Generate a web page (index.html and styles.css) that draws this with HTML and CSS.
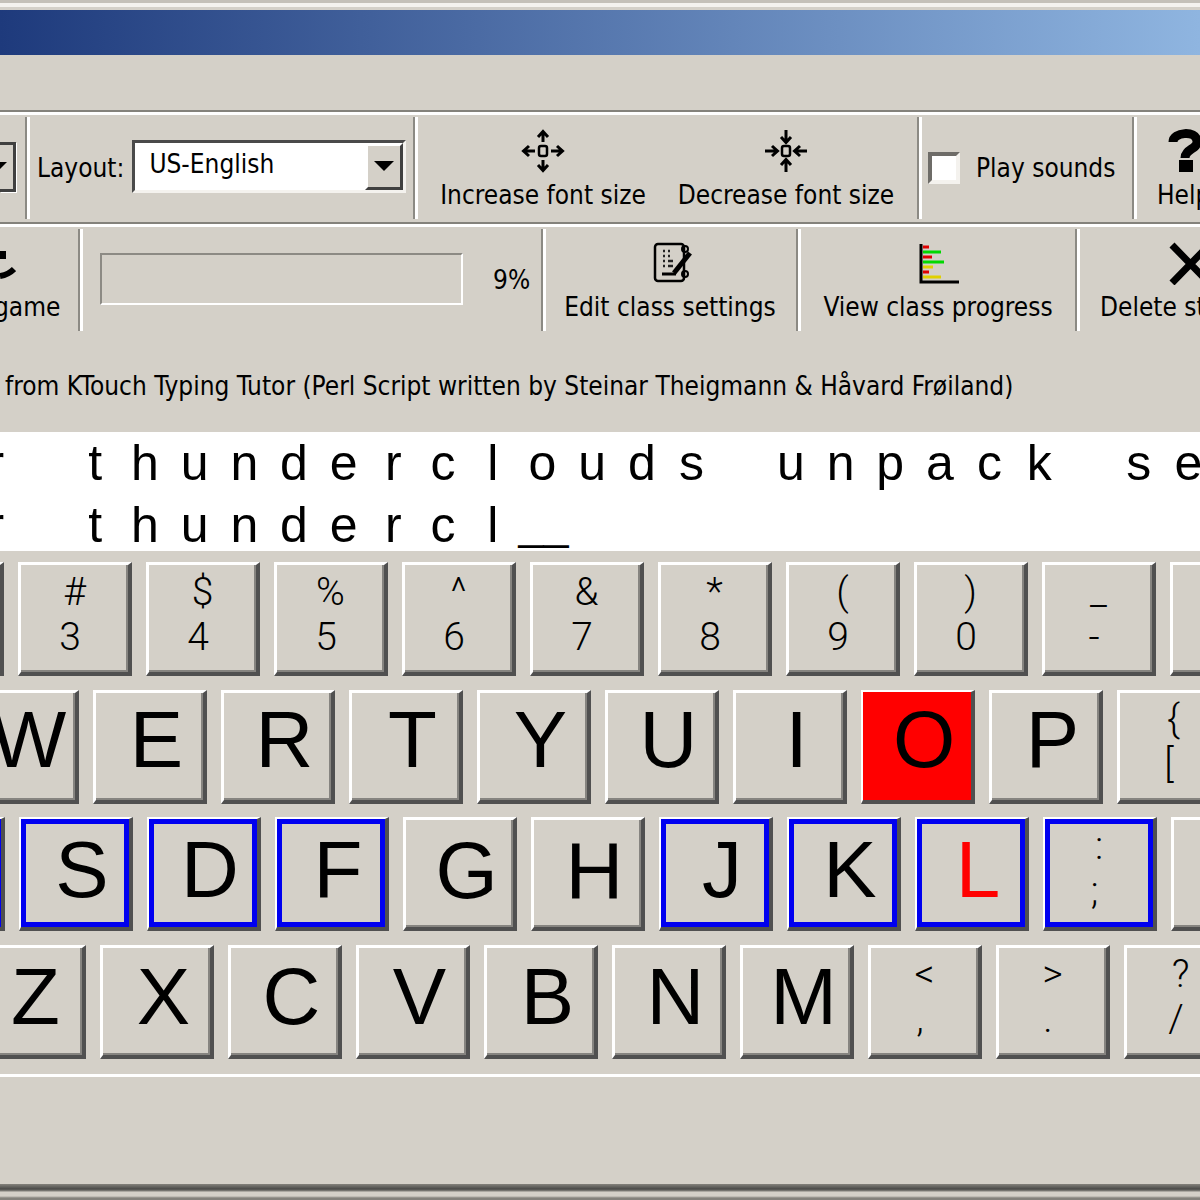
FILE: index.html
```html
<!DOCTYPE html>
<html lang="en">

<head>
    <meta charset="UTF-8">
    <title>Typing Tutor</title>
    <link rel="stylesheet" href="styles.css">
</head>

<body>
    <div class="window">
        <div class="top-edge"></div>
        <div class="title-bar"></div>
        <div class="menu-band"></div>

        <!-- Toolbar 1 -->
        <div class="toolbar">
            <div class="group combo-stub-group">
                <div class="combo-stub"><span class="combo-arrow"></span></div>
            </div>
            <div class="sep"></div>
            <div class="group layout-group">
                <span class="label">Layout:</span>
                <div class="combo">
                    <span class="combo-text">US-English</span>
                    <span class="combo-btn"><span class="combo-arrow"></span></span>
                </div>
            </div>
            <div class="sep"></div>
            <div class="group font-group">
                <div class="tool-btn increase-btn">
                    <svg class="icon" width="44" height="44" viewBox="0 0 44 44">
                        <rect x="18" y="17" width="8" height="10" rx="2" fill="none" stroke="#000" stroke-width="2.5" />
                        <path d="M22 3V13M17 8L22 2.500L27 8M22 31V41M17 36L22 41.500L27 36M3 22H14M8 17L2.500 22L8 27M30 22H41M36 17L41.500 22L36 27" fill="none" stroke="#000" stroke-width="3" />
                    </svg>
                    <span>Increase font size</span>
                </div>
                <div class="tool-btn decrease-btn">
                    <svg class="icon" width="44" height="44" viewBox="0 0 44 44">
                        <rect x="18" y="17" width="8" height="10" rx="2" fill="none" stroke="#000" stroke-width="2.500" />
                        <path d="M22 1V13M17 8L22 13.500L27 8M22 31V43M17 36L22 30.500L27 36M1 22H13M8 17L13.500 22L8 27M31 22H43M36 17L30.500 22L36 27" fill="none" stroke="#000" stroke-width="3" />
                    </svg>
                    <span>Decrease font size</span>
                </div>
            </div>
            <div class="sep"></div>
            <div class="group sound-group">
                <span class="checkbox"></span>
                <span class="label">Play sounds</span>
            </div>
            <div class="sep"></div>
            <div class="tool-btn help-btn">
                <svg class="icon" width="36" height="44" viewBox="0 0 36 44">
                    <path d="M5 13C5 3 28 1 29 12C30 20 17 20 17 29" fill="none" stroke="#000" stroke-width="9" />
                    <rect x="11" y="31" width="14" height="12" />
                </svg>
                <span>Help</span>
            </div>
        </div>

        <!-- Toolbar 2 -->
        <div class="toolbar">
            <div class="tool-btn restart-btn">
                <svg class="icon" width="16" height="44" viewBox="0 0 16 44">
                    <rect x="0" y="10" width="6" height="8" />
                    <path d="M0 35C6 34 10 32 14 28" fill="none" stroke="#000" stroke-width="6" />
                </svg>
                <span>game</span>
            </div>
            <div class="sep"></div>
            <div class="group progress-group">
                <div class="progress"></div>
                <span class="label">9%</span>
            </div>
            <div class="sep"></div>
            <div class="tool-btn edit-btn">
                <svg class="icon edit-icon" width="44" height="44" viewBox="0 0 44 44">
                    <rect x="3" y="3" width="29" height="37" rx="3" fill="none" stroke="#000" stroke-width="2.500" />
                    <path d="M11 10h2M16 10h2M11 15h2M16 15h2M11 20h2M16 20h5M11 25h2M16 25h5" stroke="#222" stroke-width="2.500" fill="none" />
                    <path d="M10 33H24" stroke="#000" stroke-width="3" fill="none" />
                    <path d="M22 32L38 12" stroke="#000" stroke-width="5" fill="none" />
                    <circle cx="33" cy="8" r="3" fill="none" stroke="#000" stroke-width="2" />
                    <circle cx="33" cy="33" r="3" fill="none" stroke="#000" stroke-width="2" />
                </svg>
                <span>Edit class settings</span>
            </div>
            <div class="sep"></div>
            <div class="tool-btn view-btn">
                <svg class="icon view-icon" width="44" height="44" viewBox="0 0 44 44">
                    <path d="M3 3V41H41" fill="none" stroke="#000" stroke-width="3" />
                    <path d="M5 6H11M5 16H14M5 31H11" stroke="#e00000" stroke-width="3" />
                    <path d="M5 11H23M5 21H26" stroke="#00d800" stroke-width="3" />
                    <path d="M5 26H15M5 36H23" stroke="#e0d000" stroke-width="3" />
                </svg>
                <span>View class progress</span>
            </div>
            <div class="sep"></div>
            <div class="tool-btn delete-btn">
                <svg class="icon delete-icon" width="44" height="44" viewBox="0 0 44 44">
                    <path d="M3 4L40 42M3 42L40 4" fill="none" stroke="#000" stroke-width="7" />
                </svg>
                <span>Delete student</span>
            </div>
        </div>

        <div class="info">from KTouch Typing Tutor (Perl Script written by Steinar Theigmann &amp; Håvard Frøiland)</div>

        <!-- Typing lines -->
        <div class="typing">
            <div class="line">
                <span>r</span><span></span><span>t</span><span>h</span><span>u</span><span>n</span><span>d</span><span>e</span><span>r</span><span>c</span><span>l</span><span>o</span><span>u</span><span>d</span><span>s</span><span></span><span>u</span><span>n</span><span>p</span><span>a</span><span>c</span><span>k</span><span></span><span>s</span><span>e</span>
            </div>
            <div class="line">
                <span>r</span><span></span><span>t</span><span>h</span><span>u</span><span>n</span><span>d</span><span>e</span><span>r</span><span>c</span><span>l</span><span class="cursor">__</span>
            </div>
        </div>

        <!-- Keyboard -->
        <div class="keyboard">
            <div class="row row-1">
                <div class="key two"><span>@</span><span class="low">2</span></div>
                <div class="key two"><span>#</span><span class="low">3</span></div>
                <div class="key two"><span>$</span><span class="low">4</span></div>
                <div class="key two"><span>%</span><span class="low">5</span></div>
                <div class="key two"><span>^</span><span class="low">6</span></div>
                <div class="key two"><span>&amp;</span><span class="low">7</span></div>
                <div class="key two"><span>*</span><span class="low">8</span></div>
                <div class="key two"><span>(</span><span class="low">9</span></div>
                <div class="key two"><span>)</span><span class="low">0</span></div>
                <div class="key two"><span>_</span><span class="low">-</span></div>
                <div class="key two"><span>+</span><span class="low">=</span></div>
            </div>
            <div class="row row-2">
                <div class="key letter">W</div>
                <div class="key letter">E</div>
                <div class="key letter">R</div>
                <div class="key letter">T</div>
                <div class="key letter">Y</div>
                <div class="key letter">U</div>
                <div class="key letter">I</div>
                <div class="key letter active">O</div>
                <div class="key letter">P</div>
                <div class="key two"><span>{</span><span class="low">[</span></div>
            </div>
            <div class="row row-3">
                <div class="key letter home">A</div>
                <div class="key letter home">S</div>
                <div class="key letter home">D</div>
                <div class="key letter home">F</div>
                <div class="key letter">G</div>
                <div class="key letter">H</div>
                <div class="key letter home">J</div>
                <div class="key letter home">K</div>
                <div class="key letter home next">L</div>
                <div class="key two home"><span>:</span><span class="low">;</span></div>
                <div class="key two"><span>"</span><span class="low">'</span></div>
            </div>
            <div class="row row-4">
                <div class="key letter">Z</div>
                <div class="key letter">X</div>
                <div class="key letter">C</div>
                <div class="key letter">V</div>
                <div class="key letter">B</div>
                <div class="key letter">N</div>
                <div class="key letter">M</div>
                <div class="key two"><span>&lt;</span><span class="low">,</span></div>
                <div class="key two"><span>&gt;</span><span class="low">.</span></div>
                <div class="key two"><span>?</span><span class="low">/</span></div>
            </div>
        </div>

        <div class="status-band"></div>
    </div>
</body>

</html>
```

FILE: styles.css
```css
body {
    margin: 0;
    padding: 0;
    overflow: hidden;
    font-family: "DejaVu Sans Condensed", "Liberation Sans", sans-serif;
    color: #000;
}

.window {
    width: 1200px;
    height: 1200px;
    overflow: hidden;
    background: #d4d0c8;
    display: flex;
    flex-direction: column;
}

.top-edge {
    height: 10px;
    box-sizing: border-box;
    border-top: 3px solid #c4c0b8;
    border-bottom: 3px solid #d4d0c8;
    background: #f4f2ee;
}

.title-bar {
    height: 45px;
    background: linear-gradient(to right, #1e3a7c, #8fb5e0);
}

.menu-band {
    height: 55px;
}

/* Toolbars */
.toolbar {
    height: 112px;
    box-sizing: border-box;
    border-top: 2px solid #84827c;
    display: flex;
    align-items: stretch;
    padding: 5px 0 3px;
    box-shadow: inset 0 3px 0 #fff;
    font-size: 26px;
    white-space: nowrap;
}

.sep {
    flex: none;
    width: 2px;
    background: #8c8a84;
    border-right: 3px solid #fff;
}

.group {
    display: flex;
    align-items: center;
    flex: none;
}

.tool-btn {
    display: flex;
    flex-direction: column;
    align-items: center;
    flex: none;
    overflow: hidden;
}

.icon {
    display: block;
    margin-top: 12px;
    flex: none;
}

.tool-btn span {
    margin-top: 4px;
    line-height: 36px;
}

.combo-stub-group {
    width: 25px;
}

.combo-stub {
    width: 16px;
    height: 50px;
    margin-top: -3px;
    box-sizing: border-box;
    background: #d4d0c8;
    border-top: 3px solid #404040;
    border-right: 3px solid #404040;
    border-bottom: 3px solid #404040;
    box-shadow: 1px 1px 0 #fff;
    display: flex;
    align-items: center;
}

.combo-stub .combo-arrow {
    margin-left: -13px;
}

.layout-group {
    width: 383px;
    padding-left: 7px;
    box-sizing: border-box;
}

.layout-group .label {
    margin-right: 8px;
    margin-top: -1px;
}

.combo {
    width: 274px;
    height: 53px;
    margin-top: -4px;
    box-sizing: border-box;
    background: #fff;
    border: 3px solid;
    border-color: #4a4a4a #f4f2ee #f4f2ee #4a4a4a;
    display: flex;
    align-items: center;
    justify-content: space-between;
    padding-left: 14px;
}

.combo-text {
    margin-top: -4px;
}

.combo-btn {
    width: 38px;
    height: 100%;
    box-sizing: border-box;
    background: #d4d0c8;
    border: 3px solid;
    border-color: #fff #404040 #404040 #fff;
    display: flex;
    align-items: center;
    justify-content: center;
}

.combo-arrow {
    flex: none;
    width: 0;
    height: 0;
    border-left: 10px solid transparent;
    border-right: 10px solid transparent;
    border-top: 10px solid #000;
}

.font-group {
    width: 499px;
    align-items: stretch;
}

.increase-btn {
    width: 250px;
}

.decrease-btn {
    width: 236px;
}

.sound-group {
    width: 210px;
    padding-left: 6px;
    box-sizing: border-box;
}

.checkbox {
    width: 32px;
    height: 32px;
    box-sizing: border-box;
    background: #fff;
    border: 4px solid;
    border-color: #6e6c68 #f4f2ee #f4f2ee #6e6c68;
    margin-right: 16px;
}

.help-btn {
    width: 67px;
    align-items: flex-start;
    padding-left: 20px;
}

.help-btn .icon {
    margin-left: 11px;
}

.restart-btn {
    width: 78px;
    align-items: flex-start;
}

.restart-btn span {
    margin-left: -6px;
}

.progress-group {
    width: 458px;
    padding-left: 17px;
    box-sizing: border-box;
}

.progress {
    width: 363px;
    height: 52px;
    margin-top: -2px;
    box-sizing: border-box;
    border: 2px solid;
    border-color: #8c8a84 #fff #fff #8c8a84;
    margin-right: 30px;
}

.edit-btn {
    width: 248px;
    padding-right: 2px;
}

.edit-icon {
    margin-left: 8px;
}

.view-btn {
    width: 274px;
}

.view-icon {
    margin-left: 4px;
}

.delete-btn {
    width: 120px;
    align-items: flex-start;
    padding-left: 20px;
}

.delete-icon {
    margin-left: 69px;
}

.info {
    height: 98px;
    padding-left: 5px;
    box-sizing: border-box;
    font-size: 26px;
    line-height: 104px;
    white-space: nowrap;
}

/* Typing lines */
.typing {
    height: 119px;
    flex: none;
    background: #fff;
    font-family: "Liberation Sans", Arial, sans-serif;
    font-size: 50px;
    line-height: 62px;
}

.line {
    display: flex;
    margin-left: -29px;
}

.line span {
    flex: none;
    width: 49.7px;
    text-align: center;
}

.line .cursor {
    font-size: 45px;
    line-height: 60px;
    padding-left: 1px;
    text-align: left;
    white-space: nowrap;
}

/* Keyboard */
.keyboard {
    flex: none;
    height: 526px;
    box-sizing: border-box;
    padding-top: 11px;
    display: flex;
    flex-direction: column;
    row-gap: 13.5px;
    font-family: "Liberation Sans", Arial, sans-serif;
    border-bottom: 3px solid #fff;
}

.row {
    display: flex;
    column-gap: 14px;
}

.row-1 {
    margin-left: -110px;
}

.row-2 {
    margin-left: -35px;
}

.row-3 {
    margin-left: -109px;
}

.row-4 {
    margin-left: -28px;
}

.key {
    flex: none;
    width: 114px;
    height: 114px;
    box-sizing: border-box;
    background: #d4d0c8;
    border-style: solid;
    border-width: 3px 4px 4px 3px;
    border-color: #fff #505050 #505050 #fff;
    display: flex;
    align-items: center;
    justify-content: center;
    box-shadow: inset -2px -2px 0 #868480;
}

.letter {
    font-size: 80px;
    line-height: 1;
    padding: 0 0 12px 14px;
}

.row-3 .letter {
    padding-bottom: 6px;
}

.row-4 .letter {
    padding-bottom: 9px;
}

.two {
    flex-direction: column;
    font-family: Roboto, "Liberation Sans", sans-serif;
    font-weight: 300;
    font-size: 39px;
    line-height: 45px;
    padding-bottom: 8px;
}

.two .low {
    margin-right: 9px;
}

.home {
    border-width: 2px 4px 4px 2px;
    box-shadow: inset 0 0 0 5px #0000f0;
}

.next {
    color: #ff0000;
}

.active {
    background: #ff0000;
    box-shadow: none;
    border-width: 2px 4px 4px 2px;
}

.status-band {
    flex: 1;
    display: flex;
    box-sizing: border-box;
    border-top: 107px solid #d4d0c8;
    background: linear-gradient(to bottom, #84827c 0, #4a4a48 5px, #84827c 7px, #d4d0c8 8px, #d4d0c8 12px, #84827c 14px);
}
```
